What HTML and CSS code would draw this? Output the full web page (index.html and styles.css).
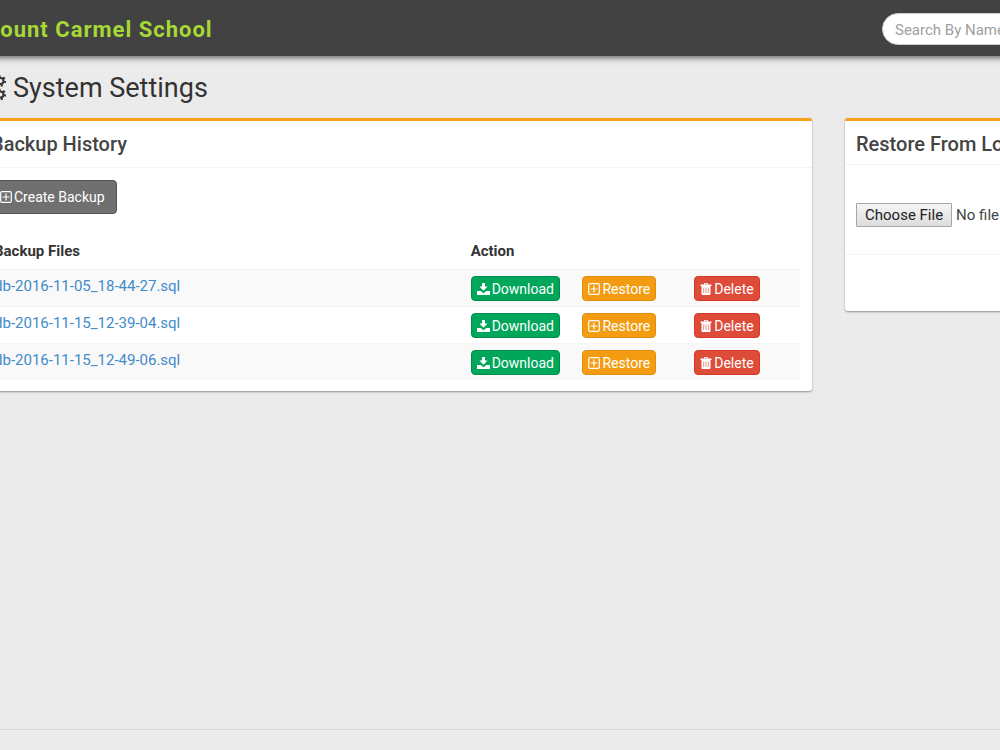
FILE: index.html
```html
<!DOCTYPE html>
<html lang="en">
<head>
<meta charset="utf-8">
<title>System Settings</title>
<link rel="stylesheet" href="styles.css">
</head>
<body>
<svg class="sprite" aria-hidden="true">
  <symbol id="plus-box" viewBox="0 0 12 12"><path fill="none" stroke="currentColor" stroke-width="1.2" d="M2 .7h8Q11.300.7 11.300 2v8Q11.300 11.300 10 11.300H2Q.7 11.300.7 10V2Q.7.7 2 .7zM6 2.500v7M2.500 6h7"/></symbol>
  <symbol id="download" viewBox="0 0 13 12"><path fill="currentColor" d="M5 0h3v3.500h2.600L6.500 7.700 2.400 3.500H5zM0 8h3.600l2.900 2.200L9.400 8H13v4H0z"/></symbol>
  <symbol id="trash" viewBox="0 0 11 12"><path fill="currentColor" fill-rule="evenodd" d="M3.500 1.500V.6Q3.500 0 4.100 0h2.800q.6 0 .6.600v.9H11v1.500h-1V11q0 1-1 1H2q-1 0-1-1V3H0V1.500zM4.400.8v.7h2.200V.8zM3 4.500V10h.6V4.500zm2.200 0V10h.6V4.500zm2.200 0V10H8V4.500z"/></symbol>
  <symbol id="cogs" viewBox="0 0 28 26"><g fill="none" stroke="currentColor"><circle cx="10" cy="13" r="5.500" stroke-width="4"/><circle cx="10" cy="13" r="8.500" stroke-width="3" stroke-dasharray="3.300 3.370"/><circle cx="22.500" cy="6" r="3" stroke-width="2"/><circle cx="22.500" cy="6" r="4.700" stroke-width="2" stroke-dasharray="2 2.920"/><circle cx="22.500" cy="19.500" r="3" stroke-width="2"/><circle cx="22.500" cy="19.500" r="4.700" stroke-width="2" stroke-dasharray="2 2.920"/></g></symbol>
</svg>
<header class="topbar">
  <div class="brand">Mount Carmel School</div>
  <input class="search" type="text" placeholder="Search By Name" aria-label="Search By Name">
</header>
<main class="content">
  <h1 class="page-title"><svg class="cogs" aria-hidden="true"><use href="#cogs"/></svg>System Settings</h1>
  <div class="panels">
    <section class="panel">
      <h2 class="panel-title history-title">Backup History</h2>
      <div class="history-body">
        <button class="btn btn-create" type="button"><svg class="icon" aria-hidden="true"><use href="#plus-box"/></svg>Create Backup</button>
        <table class="files">
          <thead><tr><th class="file-col">Backup Files</th><th>Action</th><th></th><th></th></tr></thead>
          <tbody>
            <tr>
              <td><a class="file" href="#">db-2016-11-05_18-44-27.sql</a></td>
              <td><button class="btn btn-download" type="button"><svg class="icon icon-wide" aria-hidden="true"><use href="#download"/></svg>Download</button></td>
              <td><button class="btn btn-restore" type="button"><svg class="icon" aria-hidden="true"><use href="#plus-box"/></svg>Restore</button></td>
              <td><button class="btn btn-delete" type="button"><svg class="icon" aria-hidden="true"><use href="#trash"/></svg>Delete</button></td>
            </tr>
            <tr>
              <td><a class="file" href="#">db-2016-11-15_12-39-04.sql</a></td>
              <td><button class="btn btn-download" type="button"><svg class="icon icon-wide" aria-hidden="true"><use href="#download"/></svg>Download</button></td>
              <td><button class="btn btn-restore" type="button"><svg class="icon" aria-hidden="true"><use href="#plus-box"/></svg>Restore</button></td>
              <td><button class="btn btn-delete" type="button"><svg class="icon" aria-hidden="true"><use href="#trash"/></svg>Delete</button></td>
            </tr>
            <tr>
              <td><a class="file" href="#">db-2016-11-15_12-49-06.sql</a></td>
              <td><button class="btn btn-download" type="button"><svg class="icon icon-wide" aria-hidden="true"><use href="#download"/></svg>Download</button></td>
              <td><button class="btn btn-restore" type="button"><svg class="icon" aria-hidden="true"><use href="#plus-box"/></svg>Restore</button></td>
              <td><button class="btn btn-delete" type="button"><svg class="icon" aria-hidden="true"><use href="#trash"/></svg>Delete</button></td>
            </tr>
          </tbody>
        </table>
      </div>
    </section>
    <section class="panel">
      <h2 class="panel-title">Restore From Local</h2>
      <div class="restore-body"><input class="file-input" type="file" aria-label="Backup file"></div>
      <div class="restore-footer"></div>
    </section>
  </div>
</main>
<footer class="footer"></footer>
</body>
</html>
```
FILE: styles.css
```css
* { box-sizing: border-box; }
body {
  margin: 0;
  min-height: 100vh;
  display: flex;
  flex-direction: column;
  overflow: hidden;
  background: #ebebeb;
  color: #333;
  font: 14px/20px Roboto, sans-serif;
}
.sprite { display: none; }
.topbar {
  display: flex;
  align-items: center;
  justify-content: space-between;
  width: 126%;
  margin-left: -20px;
  padding: 13px 118px 11px 0;
  background: #424242;
  box-shadow: 0 1px 7px rgba(0, 0, 0, .7);
}
.brand {
  padding-top: 1px;
  color: #a6d836;
  font-size: 22px;
  font-weight: 700;
  line-height: 31px;
  letter-spacing: 1px;
}
.search {
  width: 240px;
  height: 32px;
  padding: 1px 12px 0;
  border: 1px solid #ccc;
  border-radius: 16px;
  background: #fff;
  font: 15px/20px Roboto, sans-serif;
}
.search::placeholder { color: #a0a0a0; }
.content {
  width: 126%;
  margin-left: -18px;
  flex: 1;
}
.page-title {
  display: flex;
  align-items: center;
  gap: 7px;
  margin: 0;
  padding: 16px 0 14px;
  font-size: 27px;
  font-weight: 400;
  line-height: 32px;
}
.cogs { width: 28px; height: 26px; margin-left: -4px; }
.panels {
  display: grid;
  grid-template-columns: 23fr 11fr;
  gap: 33px;
  align-items: start;
}
.panel {
  background: #fff;
  border-top: 3px solid #f9a01b;
  border-radius: 3px;
  box-shadow: 0 1px 2px rgba(0, 0, 0, .4);
}
.panel-title {
  margin: 0;
  padding: 12px 11px 9px;
  border-bottom: 1px solid #f4f4f4;
  color: #444;
  font-size: 20px;
  font-weight: 500;
  line-height: 22px;
}
.history-title { padding: 12px 9px; }
.history-body { padding: 12px 12px 11px 6px; }
.btn {
  display: inline-flex;
  align-items: center;
  gap: 2px;
  height: 25px;
  padding: 1px 5px 0;
  border: 1px solid;
  border-radius: 4px;
  color: #fff;
  font: 14px/20px Roboto, sans-serif;
  white-space: nowrap;
}
.icon { width: 12px; height: 12px; }
.icon-wide { width: 13px; }
.btn-create {
  height: 34px;
  padding: 0 11px;
  border-color: #555;
  background: #707070;
}
.btn-download { background: #00a65a; border-color: #008d4c; }
.btn-restore { background: #f39c12; border-color: #e08e0b; }
.btn-delete { background: #dd4b39; border-color: #d73925; }
.files {
  width: 100%;
  margin-top: 19px;
  border-collapse: collapse;
  table-layout: fixed;
}
.files th {
  height: 36px;
  padding: 0 6px;
  border-bottom: 1px solid #f4f4f4;
  font-size: 15px;
  font-weight: 700;
  text-align: left;
}
.file-col { width: 58.7%; }
.files td {
  height: 37px;
  padding: 6px 6px 5px;
  border-top: 1px solid #f4f4f4;
  vertical-align: top;
}
.files td .btn { display: flex; }
.files tbody tr:nth-child(odd) { background: #f9f9f9; }
.file { color: #428bca; font-size: 15px; text-decoration: none; }
.restore-body {
  padding: 38px 11px 27px;
  border-bottom: 1px solid #f4f4f4;
}
.file-input { display: block; font: 15px/20px Roboto, sans-serif; color: #444; }
.file-input::file-selector-button {
  height: 24px;
  margin-right: 4px;
  padding: 0 8px;
  border: 1px solid #a6a6a6;
  border-radius: 1px;
  background: linear-gradient(#f5f5f5, #dcdcdc);
  color: #222;
  font: 15px/20px Roboto, sans-serif;
}
.restore-footer { height: 56px; }
.footer { height: 21px; border-top: 1px solid #d2d6de; }
```
